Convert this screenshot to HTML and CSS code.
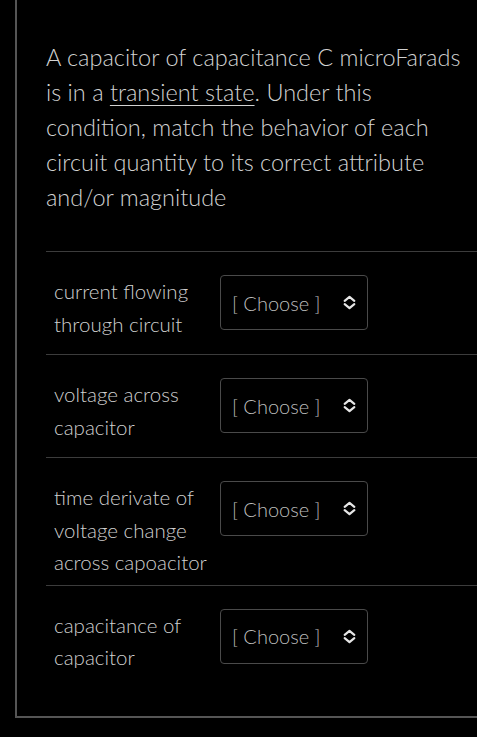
FILE: index.html
```html
<!DOCTYPE html>
<html lang="en">
<head>
    <meta charset="UTF-8">
    <meta name="viewport" content="width=device-width, initial-scale=1.0">
    <title>Question</title>
    <link rel="stylesheet" href="styles.css">
</head>
<body>
    <div class="question">
        <p class="prompt">A capacitor of capacitance C microFarads is in a <u>transient state</u>. Under this condition, match the behavior of each circuit quantity to its correct attribute and/or magnitude</p>

        <div class="answers">
            <div class="answer">
                <label class="answer-label" for="q1">current flowing through circuit</label>
                <div class="choose" id="q1">
                    <span>[ Choose ]</span>
                    <svg class="chevron" width="15" height="15" viewBox="0 0 14 14"><path d="M2.5 5.5 L7 1.8 L11.5 5.5 M2.5 8.5 L7 12.2 L11.5 8.5" fill="none" stroke="#e6e6e6" stroke-width="2" stroke-linecap="round" stroke-linejoin="round"/></svg>
                </div>
            </div>
            <div class="answer">
                <label class="answer-label" for="q2">voltage across capacitor</label>
                <div class="choose" id="q2">
                    <span>[ Choose ]</span>
                    <svg class="chevron" width="15" height="15" viewBox="0 0 14 14"><path d="M2.5 5.5 L7 1.8 L11.5 5.5 M2.5 8.5 L7 12.2 L11.5 8.5" fill="none" stroke="#e6e6e6" stroke-width="2" stroke-linecap="round" stroke-linejoin="round"/></svg>
                </div>
            </div>
            <div class="answer">
                <label class="answer-label" for="q3">time derivate of voltage change across capoacitor</label>
                <div class="choose" id="q3">
                    <span>[ Choose ]</span>
                    <svg class="chevron" width="15" height="15" viewBox="0 0 14 14"><path d="M2.5 5.5 L7 1.8 L11.5 5.5 M2.5 8.5 L7 12.2 L11.5 8.5" fill="none" stroke="#e6e6e6" stroke-width="2" stroke-linecap="round" stroke-linejoin="round"/></svg>
                </div>
            </div>
            <div class="answer">
                <label class="answer-label" for="q4">capacitance of capacitor</label>
                <div class="choose" id="q4">
                    <span>[ Choose ]</span>
                    <svg class="chevron" width="15" height="15" viewBox="0 0 14 14"><path d="M2.5 5.5 L7 1.8 L11.5 5.5 M2.5 8.5 L7 12.2 L11.5 8.5" fill="none" stroke="#e6e6e6" stroke-width="2" stroke-linecap="round" stroke-linejoin="round"/></svg>
                </div>
            </div>
        </div>
    </div>
</body>
</html>
```

FILE: styles.css
```css
body {
    font-family: Lato, "Open Sans", sans-serif;
    font-weight: 300;
    background-color: #000;
    color: #d2d2d2;
    margin: 0;
    padding: 0;
    height: 737px;
    overflow: hidden;
}
.question {
    margin-left: 15px;
    margin-top: -10px;
    width: 480px;
    border-left: 2px solid #555;
    border-bottom: 2px solid #555;
    padding: 0 0 28px 29px;
}
.prompt {
    margin: 0;
    max-width: 418px;
    padding-top: 50px;
    font-size: 23.5px;
    line-height: 35px;
}
.prompt u {
    text-underline-offset: 4px;
    text-decoration-thickness: 1px;
}
.answers {
    margin-top: 36px;
}
.answer {
    display: flex;
    align-items: flex-start;
    border-top: 1px solid #3c3c3c;
    padding: 23px 0 0 8px;
}
.answer-label {
    width: 166px;
    font-size: 20.5px;
    line-height: 32.5px;
    padding-bottom: 6px;
    color: #cfcfcf;
}
.choose {
    box-sizing: border-box;
    width: 148px;
    height: 55px;
    border: 1px solid #4a4a4a;
    border-radius: 4px;
    display: flex;
    align-items: center;
    justify-content: space-between;
    padding: 0 10px 0 11px;
    margin-bottom: 24px;
    font-size: 20px;
    color: #bdbdbd;
}
.chevron {
    display: block;
}
```
